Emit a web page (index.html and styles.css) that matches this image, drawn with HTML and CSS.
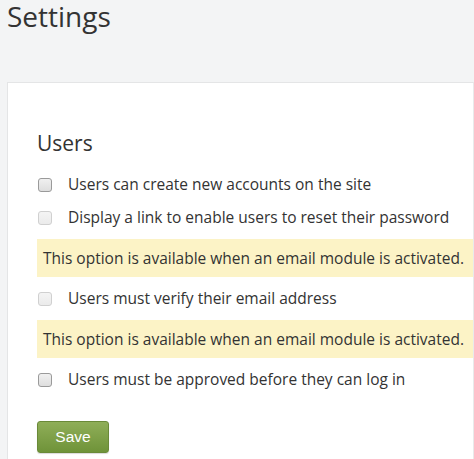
FILE: index.html
```html
<!DOCTYPE html>
<html lang="en">
<head>
<meta charset="utf-8">
<title>Settings</title>
<link rel="stylesheet" href="styles.css">
</head>
<body>
<div class="page-head">
  <h1 class="page-title">Settings</h1>
</div>
<div class="card">
  <h2 class="section-title">Users</h2>
  <div class="options">
    <label class="option"><span class="check"></span><span>Users can create new accounts on the site</span></label>
    <label class="option disabled"><span class="check"></span><span>Display a link to enable users to reset their password</span></label>
    <div class="notice">This option is available when an email module is activated.</div>
    <label class="option disabled"><span class="check"></span><span>Users must verify their email address</span></label>
    <div class="notice">This option is available when an email module is activated.</div>
    <label class="option"><span class="check"></span><span>Users must be approved before they can log in</span></label>
  </div>
  <button class="save-btn" type="button">Save</button>
</div>
</body>
</html>
```

FILE: styles.css
```css
html, body {
  margin: 0;
  padding: 0;
}
body {
  background: #f3f4f5;
  font-family: "Open Sans", "Noto Sans", sans-serif;
  color: #333;
  overflow: hidden;
}
.page-head {
  height: 82px;
  padding-left: 7px;
}
.page-title {
  margin: 0;
  font-size: 28px;
  line-height: 32px;
  font-weight: 400;
  color: #333;
}
.card {
  margin-left: 7px;
  background: #fff;
  border-top: 1px solid #e4e5e6;
  border-left: 1px solid #e4e5e6;
  border-right: 1px solid #e9eaeb;
  padding: 48px 0 6px 29px;
}
.section-title {
  margin: 0 0 17px 0;
  font-size: 21px;
  line-height: 25px;
  font-weight: 400;
  color: #333;
}
.options {
  display: flex;
  flex-direction: column;
  gap: 10px;
}
.option {
  display: flex;
  align-items: center;
  gap: 16px;
  font-size: 15.5px;
  line-height: 23px;
  color: #333;
  padding-left: 1px;
}
.check {
  width: 14px;
  height: 14px;
  box-sizing: border-box;
  border: 1px solid #9a9a9a;
  border-radius: 3px;
  background: linear-gradient(#f0f0f0, #dedede);
  flex: none;
}
.option.disabled .check {
  border-color: #d0d0d0;
  background: linear-gradient(#f4f4f4, #ebebeb);
}
.notice {
  background: #fcf3c6;
  font-size: 15.5px;
  line-height: 23px;
  padding: 8px 6px 7px 6px;
  color: #333;
  white-space: nowrap;
}
.save-btn {
  display: block;
  margin-top: 30px;
  width: 72px;
  height: 32px;
  border: 1px solid #6a8a38;
  border-radius: 3px;
  background: linear-gradient(#8fae58, #6f9339);
  color: #fff;
  font-family: "Liberation Sans", Arial, sans-serif;
  font-size: 15.5px;
  padding: 0;
  box-shadow: 0 1px 1px rgba(0,0,0,0.15);
}
```
